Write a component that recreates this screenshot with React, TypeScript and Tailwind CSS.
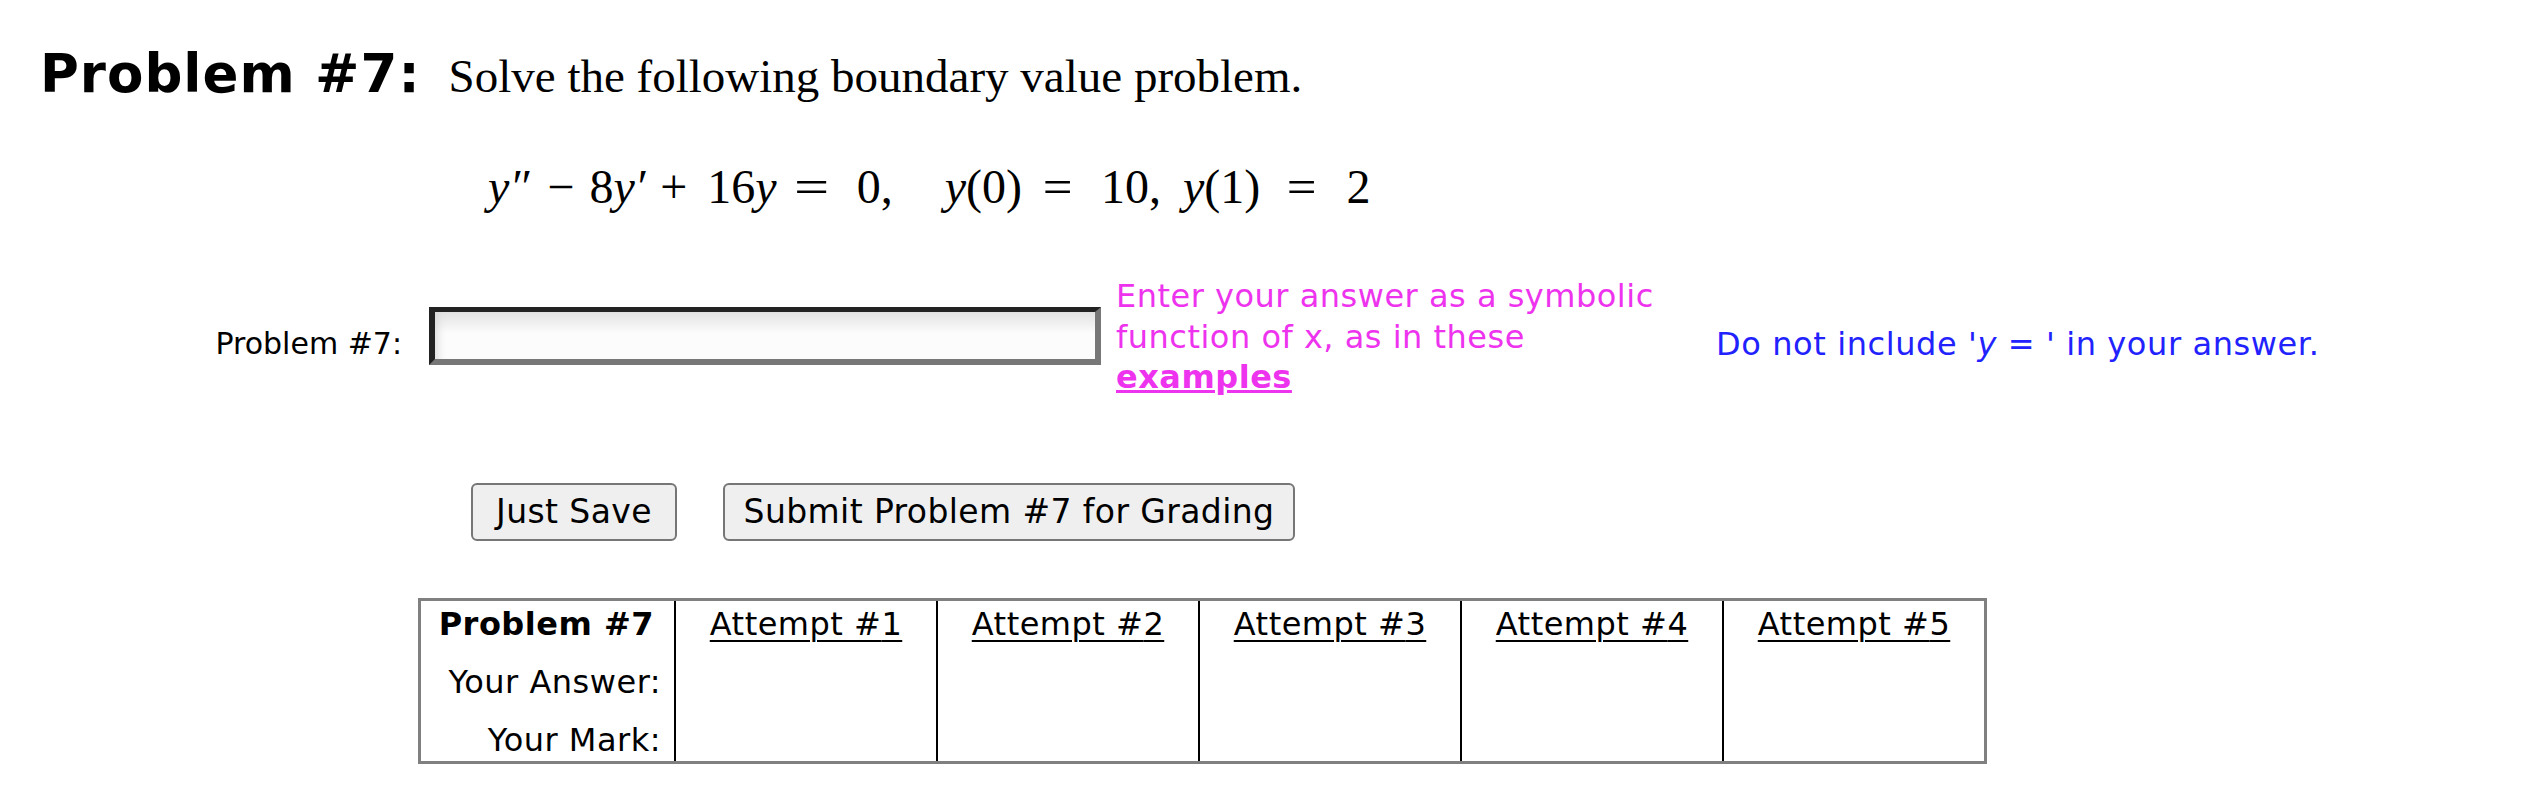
const serif = "font-['Liberation_Serif','Times_New_Roman',serif]";

function Equation() {
  return (
    <div className={`${serif} flex items-baseline h-[48px] text-[48px] leading-none ml-[488px] mt-[63px]`}>
      <span><i>y″</i></span>
      <span className="ml-[18px]">−</span>
      <span className="ml-[15px]">8</span>
      <span><i>y′</i></span>
      <span className="ml-[15px]">+</span>
      <span className="ml-[20px]">16</span>
      <span><i>y</i></span>
      <span className="ml-[21px] inline-block scale-x-[1.3]">=</span>
      <span className="ml-[32px]">0,</span>
      <span className="ml-[52px]"><i>y</i>(0)</span>
      <span className="ml-[22px] inline-block scale-x-[1.1]">=</span>
      <span className="ml-[30px]">10,</span>
      <span className="ml-[22px]"><i>y</i>(1)</span>
      <span className="ml-[28px] inline-block scale-x-[1.1]">=</span>
      <span className="ml-[31px]">2</span>
    </div>
  );
}

function AnswerRow() {
  return (
    <div className="flex items-start h-[122px] mt-[65px]">
      <div className="w-[402px] text-right text-[30px] leading-[35px] mt-[50px]">Problem #7:</div>
      <input
        type="text"
        className="ml-[27px] mt-[31px] w-[672px] h-[58px] box-border border-[6px] border-t-[5px] border-t-[#222222] border-l-[#222222] border-b-[#777777] border-r-[#777777] bg-[linear-gradient(to_bottom,#e2e2e2,#fcfcfc_45%)] shadow-[inset_10px_0_10px_-8px_#d6d6d6] outline-none"
      />
      <div className="ml-[15px] w-[570px] text-[32px] leading-[40.5px] tracking-[0.5px] text-[#ee33ee]">
        Enter your answer as a symbolic
        <br />
        function of x, as in these
        <br />
        <a href="#" className="font-bold underline">examples</a>
      </div>
      <div className="ml-[30px] mt-[48px] text-[32px] leading-[40.5px] tracking-[0.6px] text-[#2222ff] whitespace-nowrap">
        Do not include '<i>y</i> = ' in your answer.
      </div>
    </div>
  );
}

function Buttons() {
  return (
    <div className="flex gap-[46px] pl-[471px] mt-[85px]">
      <button className="w-[206px] h-[58px] box-border border-2 border-[#767676] rounded-[6px] bg-[#efefef] text-[33px] tracking-[0.4px] text-black">
        Just Save
      </button>
      <button className="w-[572px] h-[58px] box-border border-2 border-[#767676] rounded-[6px] bg-[#efefef] text-[33px] tracking-[0.4px] text-black">
        Submit Problem #7 for Grading
      </button>
    </div>
  );
}

function AttemptsTable() {
  const attempts = [1, 2, 3, 4, 5];
  return (
    <div className="flex w-fit ml-[418px] mt-[57px] border-[3px] border-[#808080] text-[32px] tracking-[0.5px]">
      <div className="flex flex-col w-[253px] h-[160px] text-right pr-[13px]">
        <div className="-mt-[6px] leading-[58px] font-bold pr-[7px]">Problem #7</div>
        <div className="leading-[58px]">Your Answer:</div>
        <div className="leading-[58px]">Your Mark:</div>
      </div>
      {attempts.map((n) => (
        <div key={n} className="flex flex-col w-[262px] h-[160px] border-l-2 border-black text-center">
          <div className="-mt-[6px] leading-[58px]">
            <a href="#" className="underline decoration-2 underline-offset-[5px]">Attempt #{n}</a>
          </div>
        </div>
      ))}
    </div>
  );
}

export default function App() {
  return (
    <div className="w-[2525px] h-[788px] overflow-hidden bg-white text-black font-['DejaVu_Sans',Verdana,sans-serif]">
      <div className="flex items-baseline leading-none pt-[47px] pl-[40px]">
        <span className="text-[53px] font-bold tracking-[1px]">Problem #7:</span>
        <span className={`${serif} text-[47px] ml-[28px]`}>Solve the following boundary value problem.</span>
      </div>
      <Equation />
      <AnswerRow />
      <Buttons />
      <AttemptsTable />
    </div>
  );
}
